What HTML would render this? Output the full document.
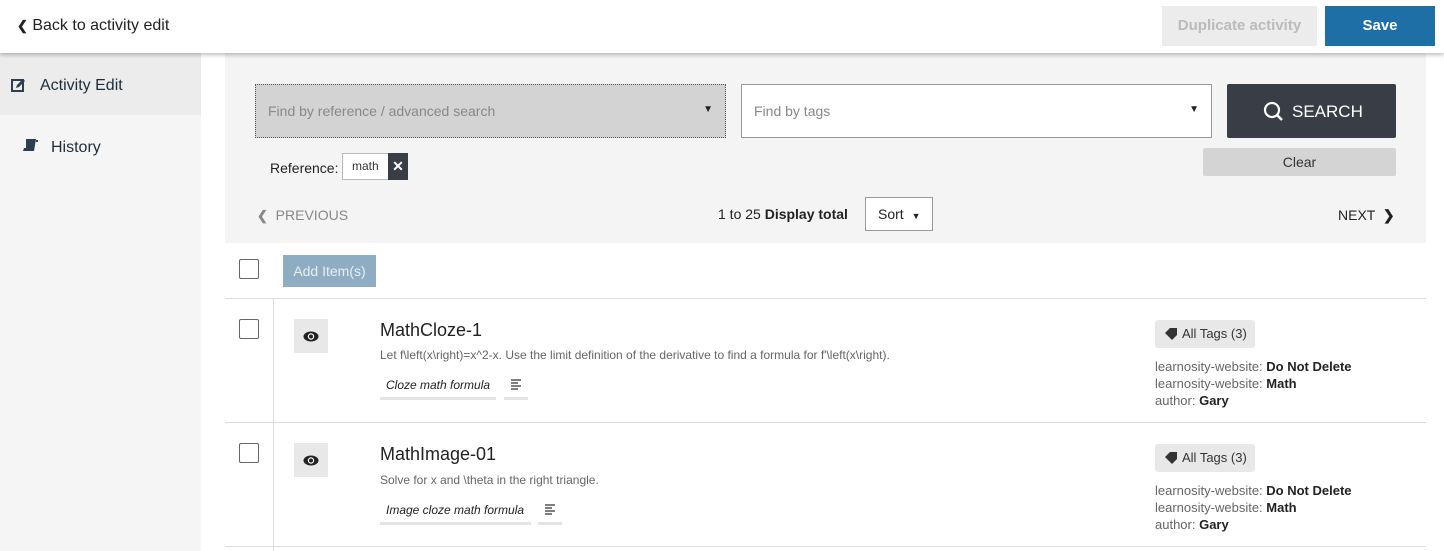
<!DOCTYPE html>
<html><head><style>
*{box-sizing:border-box;margin:0;padding:0}
body{width:1444px;height:551px;overflow:hidden;background:#fff;font-family:"Liberation Sans",sans-serif;position:relative;color:#333}
.a{position:absolute}
</style></head><body>
<div class="a" style="left:0;top:53px;width:201px;height:498px;background:#f5f5f5"></div>
<div class="a" style="left:0;top:53px;width:201px;height:62px;background:#ececec"></div>
<div class="a" style="left:0;top:0;width:1444px;height:53px;background:#fff;box-shadow:0 2px 4px rgba(0,0,0,.25);z-index:2"></div>
<div class="a" style="left:17px;top:17px;font-size:16px;color:#222;z-index:3"><span style="font-weight:bold;font-size:13px">&#10094;</span>&nbsp;Back to activity edit</div>
<div class="a" style="left:1162px;top:6px;width:155px;height:40px;background:#ececec;color:#bbb;font-size:15px;font-weight:bold;text-align:center;line-height:40px;z-index:3">Duplicate activity</div>
<div class="a" style="left:1325px;top:6px;width:110px;height:40px;background:#1d6fa5;color:#fff;font-size:15px;font-weight:bold;text-align:center;line-height:40px;z-index:3">Save</div>

<svg class="a" style="left:11px;top:78px" width="15" height="15" viewBox="0 0 15 15"><rect x="1" y="2" width="11" height="11" fill="none" stroke="#2c3e50" stroke-width="2"/><path d="M5 10l1-3 6-6 2 2-6 6z" fill="#2c3e50"/></svg>
<div class="a" style="left:40px;top:77px;font-size:16px;color:#1f2d3a">Activity Edit</div>
<svg class="a" style="left:22px;top:139px" width="16" height="15" viewBox="0 0 16 15"><path d="M4 0h10l-2 12H1l1-3h2z" fill="#2c3e50"/><rect x="14" y="1" width="2" height="2" fill="#2c3e50"/></svg>
<div class="a" style="left:51px;top:139px;font-size:16px;color:#1f2d3a">History</div>

<div class="a" style="left:225px;top:53px;width:1201px;height:190px;background:#f4f4f4"></div>
<div class="a" style="left:255px;top:84px;width:471px;height:54px;background:#d3d3d3;border:1px dotted #555;font-size:14px;color:#888;padding:18px 12px">Find by reference / advanced search<span style="position:absolute;right:12px;top:19px;font-size:10px;color:#222">&#9660;</span></div>
<div class="a" style="left:741px;top:84px;width:471px;height:54px;background:#fff;border:1px solid #999;font-size:14px;color:#888;padding:18px 12px">Find by tags<span style="position:absolute;right:12px;top:19px;font-size:10px;color:#222">&#9660;</span></div>
<div class="a" style="left:1227px;top:84px;width:169px;height:54px;background:#393d45;border-radius:2px;color:#fff;font-size:17px;line-height:56px;padding-left:65px">SEARCH</div>
<svg class="a" style="left:1263px;top:101px" width="22" height="22" viewBox="0 0 22 22"><circle cx="9" cy="9" r="7" fill="none" stroke="#fff" stroke-width="2.2"/><path d="M14 14l5 5" stroke="#fff" stroke-width="2.5"/></svg>
<div class="a" style="left:1203px;top:148px;width:193px;height:28px;background:#d4d4d4;border-radius:2px;text-align:center;line-height:28px;font-size:14px;color:#333">Clear</div>
<div class="a" style="left:270px;top:160px;font-size:14px;color:#222">Reference:</div>
<div class="a" style="left:342px;top:153px;width:47px;height:27px;background:#fff;border:1px solid #bbb;font-size:12px;line-height:25px;padding-left:9px">math</div>
<div class="a" style="left:388px;top:153px;width:20px;height:27px;background:#393d45;color:#fff;font-weight:bold;text-align:center;line-height:27px;font-size:14px">&#10005;</div>
<div class="a" style="left:257px;top:207px;font-size:14px;color:#888"><b style="font-size:13px">&#10094;</b>&nbsp; PREVIOUS</div>
<div class="a" style="left:718px;top:206px;font-size:14px;color:#222">1 to 25 <b>Display total</b></div>
<div class="a" style="left:865px;top:197px;width:68px;height:34px;background:#fff;border:1px solid #999;font-size:14px;line-height:32px;padding-left:12px;color:#222">Sort <span style="font-size:9px;margin-left:4px">&#9660;</span></div>
<div class="a" style="left:1338px;top:207px;font-size:14px;color:#222">NEXT &nbsp;<b style="font-size:14px">&#10095;</b></div>

<div class="a" style="left:239px;top:259px;width:20px;height:20px;border:1px solid #666;border-radius:2px;background:#fff"></div>
<div class="a" style="left:283px;top:255px;width:93px;height:32px;background:#8eadc2;color:#e8eef2;font-size:14px;line-height:32px;text-align:center">Add Item(s)</div>

<div class="a" style="left:225px;top:298px;width:1201px;height:1px;background:#ddd"></div>
<div class="a" style="left:225px;top:422px;width:1201px;height:1px;background:#ddd"></div>
<div class="a" style="left:225px;top:546px;width:1201px;height:1px;background:#ddd"></div>
<div class="a" style="left:273px;top:298px;width:1px;height:253px;background:#ddd"></div>

<!-- row1 -->
<div class="a" style="left:239px;top:319px;width:20px;height:20px;border:1px solid #666;border-radius:2px"></div>
<div class="a" style="left:294px;top:319px;width:34px;height:34px;background:#e8e8e8"></div>
<svg class="a" style="left:303px;top:331px" width="16" height="11" viewBox="0 0 16 11"><ellipse cx="8" cy="5.5" rx="7.5" ry="5" fill="#222"/><circle cx="8" cy="5.5" r="3.2" fill="#fff"/><circle cx="8" cy="5.5" r="2" fill="#222"/></svg>
<div class="a" style="left:380px;top:320px;font-size:18px;color:#222">MathCloze-1</div>
<div class="a" style="left:380px;top:348px;font-size:12px;color:#666">Let f\left(x\right)=x^2-x. Use the limit definition of the derivative to find a formula for f'\left(x\right).</div>
<div class="a" style="left:380px;top:376px;width:116px;height:24px;border-bottom:3px solid #e4e4e4;font-size:12px;font-style:italic;color:#222;padding-left:6px;padding-top:2px">Cloze math formula</div>
<svg class="a" style="left:511px;top:379px" width="10" height="11" viewBox="0 0 10 11"><path d="M0 1h10M0 4h7M0 7h10M0 10h7" stroke="#333" stroke-width="1.3"/></svg>
<div class="a" style="left:504px;top:376px;width:24px;height:24px;border-bottom:3px solid #e4e4e4"></div>
<div class="a" style="left:1155px;top:320px;width:100px;height:28px;background:#e8e8e8;border-radius:3px;font-size:13px;line-height:28px;padding-left:27px">All Tags (3)</div>
<svg class="a" style="left:1165px;top:328px" width="13" height="12" viewBox="0 0 13 12"><path d="M0 5L5 0h7v7l-5 5z" fill="#333"/></svg>
<div class="a" style="left:1155px;top:358px;font-size:13px;line-height:17px;color:#666">learnosity-website: <b style="color:#222">Do Not Delete</b><br>learnosity-website: <b style="color:#222">Math</b><br>author: <b style="color:#222">Gary</b></div>

<!-- row2 -->
<div class="a" style="left:239px;top:443px;width:20px;height:20px;border:1px solid #666;border-radius:2px"></div>
<div class="a" style="left:294px;top:443px;width:34px;height:34px;background:#e8e8e8"></div>
<svg class="a" style="left:303px;top:455px" width="16" height="11" viewBox="0 0 16 11"><ellipse cx="8" cy="5.5" rx="7.5" ry="5" fill="#222"/><circle cx="8" cy="5.5" r="3.2" fill="#fff"/><circle cx="8" cy="5.5" r="2" fill="#222"/></svg>
<div class="a" style="left:380px;top:444px;font-size:18px;color:#222">MathImage-01</div>
<div class="a" style="left:380px;top:473px;font-size:12px;color:#666">Solve for x and \theta in the right triangle.</div>
<div class="a" style="left:380px;top:501px;width:151px;height:24px;border-bottom:3px solid #e4e4e4;font-size:12px;font-style:italic;color:#222;padding-left:6px;padding-top:2px">Image cloze math formula</div>
<svg class="a" style="left:545px;top:504px" width="10" height="11" viewBox="0 0 10 11"><path d="M0 1h10M0 4h7M0 7h10M0 10h7" stroke="#333" stroke-width="1.3"/></svg>
<div class="a" style="left:538px;top:501px;width:24px;height:24px;border-bottom:3px solid #e4e4e4"></div>
<div class="a" style="left:1155px;top:444px;width:100px;height:28px;background:#e8e8e8;border-radius:3px;font-size:13px;line-height:28px;padding-left:27px">All Tags (3)</div>
<svg class="a" style="left:1165px;top:452px" width="13" height="12" viewBox="0 0 13 12"><path d="M0 5L5 0h7v7l-5 5z" fill="#333"/></svg>
<div class="a" style="left:1155px;top:482px;font-size:13px;line-height:17px;color:#666">learnosity-website: <b style="color:#222">Do Not Delete</b><br>learnosity-website: <b style="color:#222">Math</b><br>author: <b style="color:#222">Gary</b></div>
</body></html>
